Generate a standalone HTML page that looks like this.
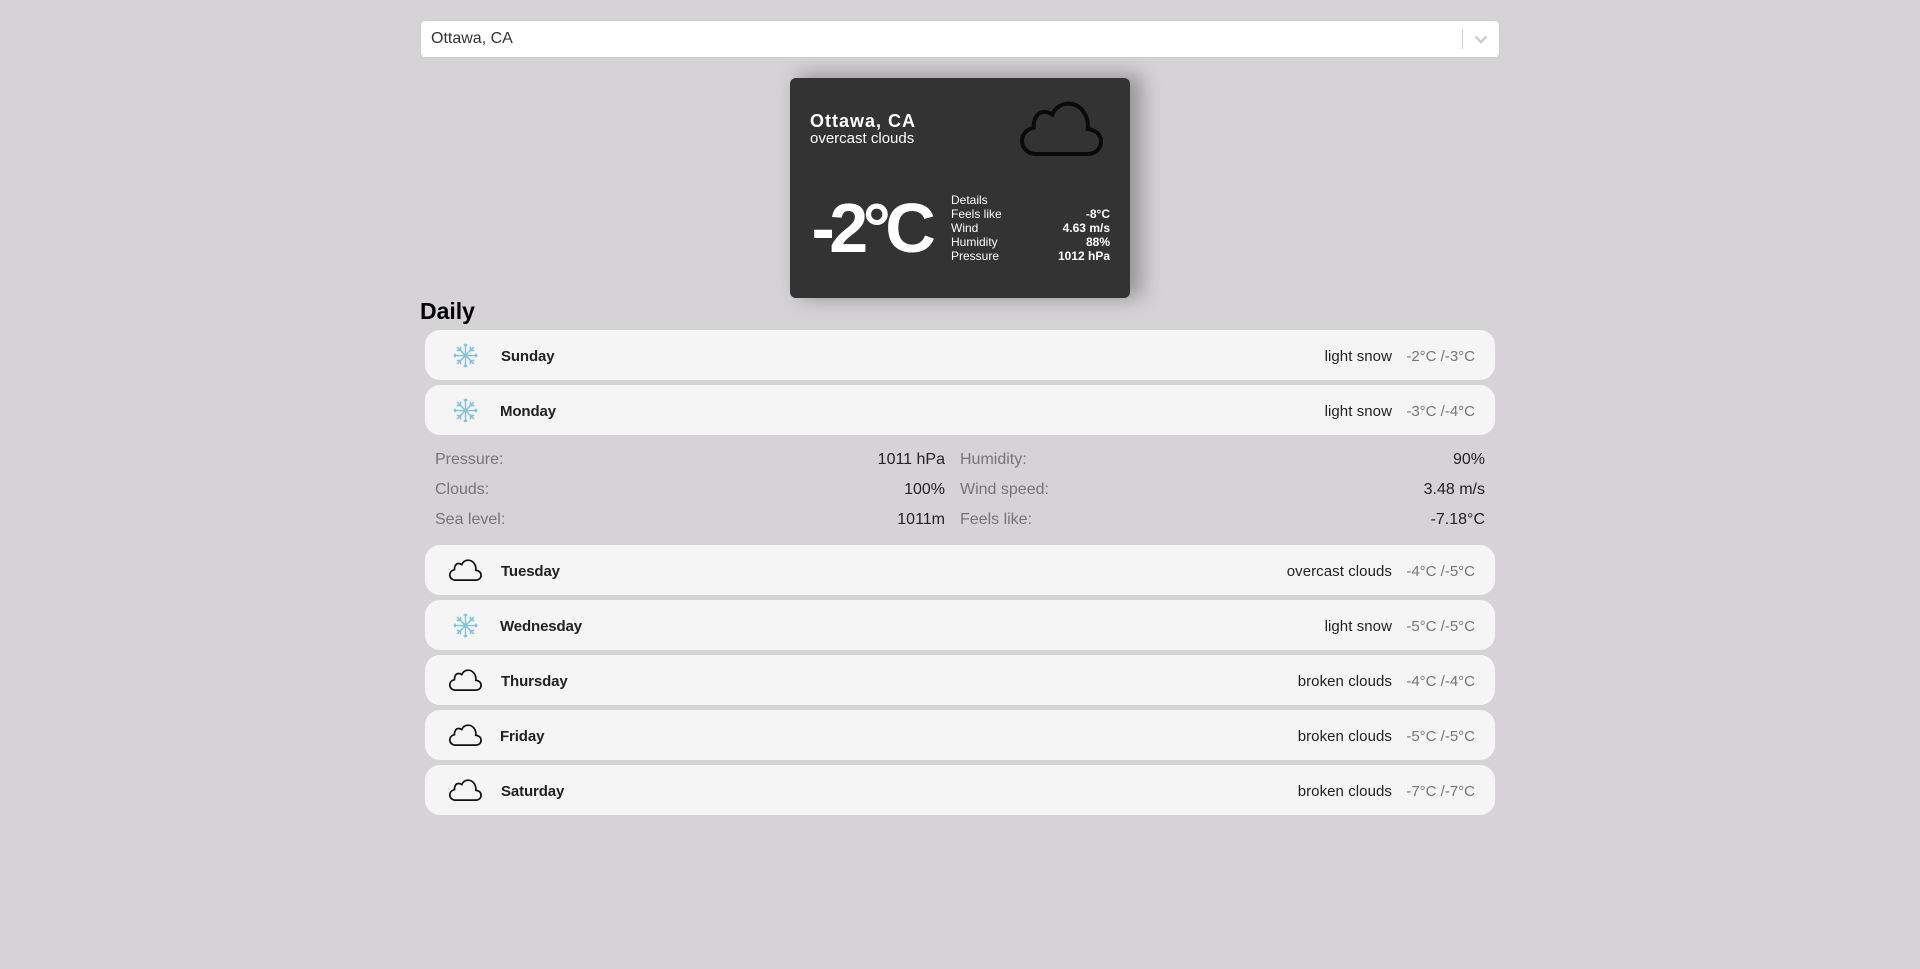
<!DOCTYPE html>
<html lang="en"><head><meta charset="utf-8"><title>Weather</title>
<style>
*{box-sizing:border-box;margin:0;padding:0}
html,body{width:1920px;height:969px;overflow:hidden;background:#d5d3d6;font-family:"Liberation Sans",Arial,sans-serif}
.a{position:absolute;white-space:nowrap}
.sel{position:absolute;left:421px;top:21px;width:1078px;height:36px;background:#fff;border-radius:4px;box-shadow:0 0 0 1px rgba(0,0,0,.03)}
.card{position:absolute;left:790px;top:78px;width:340px;height:220px;background:#333;border-radius:6px;box-shadow:10px -2px 20px 2px rgba(0,0,0,.3);color:#fff}
.p{position:absolute;left:161px;width:159px;height:14px;font-size:12px;line-height:14px;display:flex;justify-content:space-between}
.p b{font-weight:700}
.row{position:absolute;left:425px;width:1070px;height:50px;background:#f5f5f5;border-radius:15px}
.d{position:absolute;top:0;line-height:50px;font-size:15px;font-weight:700;color:#212121;padding-top:2px;letter-spacing:-.12px}
.ds{position:absolute;right:103px;top:0;line-height:50px;font-size:15px;color:#212121;padding-top:2px;letter-spacing:.07px}
.mm{position:absolute;right:20px;top:0;line-height:50px;font-size:15px;color:#757575;padding-top:2px}
.g{position:absolute;font-size:16px;line-height:30px;height:30px;display:flex;justify-content:space-between;width:510px}
.g span{color:#757575}.g i{font-style:normal;color:#212121}
.cl{position:absolute;left:24px;top:14px;width:33px;height:23px;overflow:visible}
.sn{position:absolute;left:28px;top:13px;width:25px;height:25px}
</style></head><body>
<svg width="0" height="0" style="position:absolute"><defs>
<path id="c" d="M78 192H232C258 192 273 175 273 155C273 135 258 120 233 117C238 75 210 41 175 41C152 41 135 55 127 74C118 68 108 65 100 66C82 67 70 88 71 113C48 118 36 135 36 153C36 175 55 192 78 192Z" fill="none"/>
<g id="arm"><path d="M50 50V2M50 22L39 11M50 22L61 11" fill="none" stroke="#7dc3df" stroke-width="6"/></g>
<g id="arm2"><path d="M50 50V2M50 13L43 6M50 13L57 6" fill="none" stroke="#7dc3df" stroke-width="5.5"/></g>
<g id="s"><use href="#arm2"/><use href="#arm" transform="rotate(45 50 50)"/><use href="#arm2" transform="rotate(90 50 50)"/><use href="#arm" transform="rotate(135 50 50)"/><use href="#arm2" transform="rotate(180 50 50)"/><use href="#arm" transform="rotate(225 50 50)"/><use href="#arm2" transform="rotate(270 50 50)"/><use href="#arm" transform="rotate(315 50 50)"/><circle cx="50" cy="50" r="8" fill="#7dc3df"/></g>
</defs></svg>

<div class="sel">
<div class="a" style="left:10px;top:0;line-height:36px;font-size:16px;color:#333">Ottawa, CA</div>
<div class="a" style="left:1041px;top:8px;width:1px;height:20px;background:#ccc"></div>
<svg class="a" style="left:1050px;top:8px" width="20" height="20" viewBox="0 0 20 20"><path d="M4.5 7.5L10 13L15.5 7.5" fill="none" stroke="#ccc" stroke-width="2.4"/></svg>
</div>

<div class="card">
<div class="a" style="left:20px;top:34px;font-size:18px;line-height:18px;font-weight:700;letter-spacing:1px">Ottawa, CA</div>
<div class="a" style="left:20px;top:52px;font-size:15px;line-height:17px">overcast clouds</div>
<svg class="a" style="left:220px;top:12px" width="110" height="80" viewBox="0 0 330 240"><use href="#c" stroke="#0a0a0a" stroke-width="12"/></svg>
<div class="a" style="left:21.5px;top:110px;font-size:70px;line-height:80px;font-weight:700;letter-spacing:-5.5px">-2°C</div>
<div class="p" style="top:115px"><span>Details</span></div>
<div class="p" style="top:129px"><span>Feels like</span><b>-8°C</b></div>
<div class="p" style="top:143px"><span>Wind</span><b>4.63 m/s</b></div>
<div class="p" style="top:157px"><span>Humidity</span><b>88%</b></div>
<div class="p" style="top:171px"><span>Pressure</span><b>1012 hPa</b></div>
</div>

<div class="a" style="left:420px;top:298px;font-size:23px;line-height:26px;font-weight:700;color:#000">Daily</div>

<div class="row" style="top:330px"><svg class="sn" viewBox="0 0 100 100"><use href="#s"/></svg><div class="d" style="left:76px">Sunday</div><div class="ds">light snow</div><div class="mm">-2°C /-3°C</div></div>
<div class="row" style="top:385px"><svg class="sn" viewBox="0 0 100 100"><use href="#s"/></svg><div class="d" style="left:75px">Monday</div><div class="ds">light snow</div><div class="mm">-3°C /-4°C</div></div>

<div class="g" style="left:435px;top:445px"><span>Pressure:</span><i>1011 hPa</i></div>
<div class="g" style="left:435px;top:475px"><span>Clouds:</span><i>100%</i></div>
<div class="g" style="left:435px;top:505px"><span>Sea level:</span><i>1011m</i></div>
<div class="g" style="left:960px;top:445px;width:525px"><span>Humidity:</span><i>90%</i></div>
<div class="g" style="left:960px;top:475px;width:525px"><span>Wind speed:</span><i>3.48 m/s</i></div>
<div class="g" style="left:960px;top:505px;width:525px"><span>Feels like:</span><i>-7.18°C</i></div>

<div class="row" style="top:545px"><svg class="cl" viewBox="30 34 250 170"><use href="#c" stroke="#111" stroke-width="13"/></svg><div class="d" style="left:76px">Tuesday</div><div class="ds">overcast clouds</div><div class="mm">-4°C /-5°C</div></div>
<div class="row" style="top:600px"><svg class="sn" viewBox="0 0 100 100"><use href="#s"/></svg><div class="d" style="left:75px">Wednesday</div><div class="ds">light snow</div><div class="mm">-5°C /-5°C</div></div>
<div class="row" style="top:655px"><svg class="cl" viewBox="30 34 250 170"><use href="#c" stroke="#111" stroke-width="13"/></svg><div class="d" style="left:76px">Thursday</div><div class="ds">broken clouds</div><div class="mm">-4°C /-4°C</div></div>
<div class="row" style="top:710px"><svg class="cl" viewBox="30 34 250 170"><use href="#c" stroke="#111" stroke-width="13"/></svg><div class="d" style="left:75px">Friday</div><div class="ds">broken clouds</div><div class="mm">-5°C /-5°C</div></div>
<div class="row" style="top:765px"><svg class="cl" viewBox="30 34 250 170"><use href="#c" stroke="#111" stroke-width="13"/></svg><div class="d" style="left:76px">Saturday</div><div class="ds">broken clouds</div><div class="mm">-7°C /-7°C</div></div>
</body></html>
